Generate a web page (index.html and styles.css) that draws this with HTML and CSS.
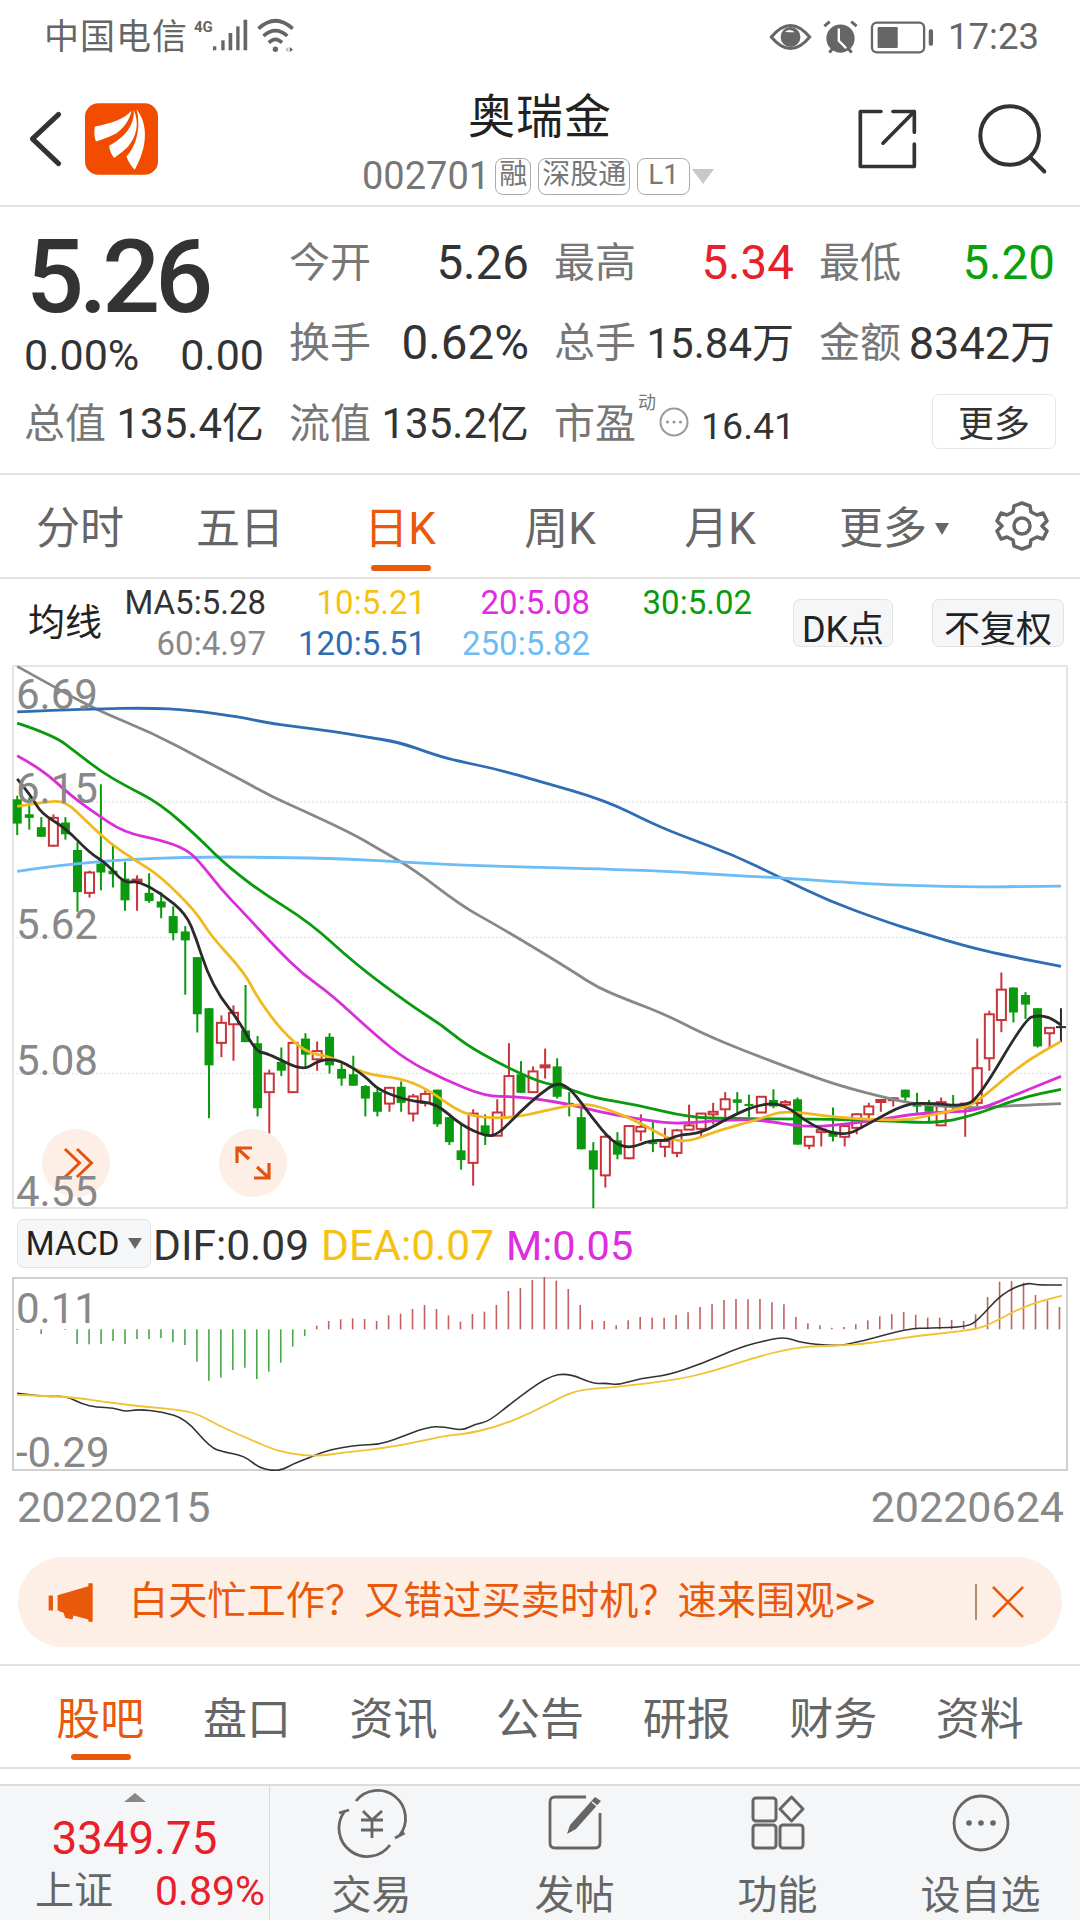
FILE: index.html
```html
<!DOCTYPE html>
<html lang="zh-CN">
<head>
    <meta charset="UTF-8">
    <meta name="viewport" content="width=device-width, initial-scale=1.0">
    <title>奥瑞金 002701</title>
    <link rel="stylesheet" href="styles.css">
</head>
<body>
    <div class="status-bar">
        <span class="carrier">中国电信</span>
        <span class="net-type">4G</span>
        <svg class="signal" viewBox="0 0 250 105">
            <g fill="#666">
                <rect x="0" y="85" width="10" height="12"/>
                <rect x="25" y="67" width="10" height="30"/>
                <rect x="47" y="45" width="11" height="52"/>
                <rect x="70" y="25" width="10" height="72"/>
                <rect x="92" y="5" width="11" height="92"/>
            </g>
            <g fill="none" stroke="#666" stroke-width="11">
                <path d="M137 32 Q188 -16 240 32"/>
                <path d="M152 54 Q188 22 224 54"/>
                <path d="M168 74 Q188 54 208 74"/>
            </g>
            <circle cx="188" cy="94" r="8" fill="#666"/>
            <polygon points="218,95 227,87 227,103" fill="#bbb"/>
            <polygon points="231,87 241,95 231,103" fill="#666"/>
        </svg>
        <div class="status-right">
            <svg class="eye" viewBox="30 35 130 90">
                <path d="M37 80 Q95 10 153 80 Q95 150 37 80 Z" fill="none" stroke="#666" stroke-width="9"/>
                <circle cx="95" cy="80" r="30" fill="#666"/>
                <path d="M78 65 Q92 52 108 66 Q92 66 78 65 Z" fill="#fff"/>
            </svg>
            <svg class="alarm" viewBox="190 25 110 110">
                <circle cx="245" cy="83" r="42" fill="#666"/>
                <path d="M197 46 L213 33 M293 46 L277 33 M212 125 L220 115 M278 125 L270 115" stroke="#666" stroke-width="9" fill="none"/>
                <path d="M240 53 V90 L262 112" stroke="#fff" stroke-width="7" fill="none"/>
            </svg>
            <svg class="battery" viewBox="335 30 195 100">
                <rect x="340" y="35" width="158" height="90" rx="15" fill="none" stroke="#666" stroke-width="7"/>
                <rect x="357" y="48" width="61" height="64" rx="3" fill="#666"/>
                <rect x="512" y="55" width="13" height="50" rx="5" fill="#666"/>
            </svg>
            <span class="clock">17:23</span>
        </div>
    </div>

    <div class="title-bar">
        <div class="title-left">
            <svg class="back" viewBox="25 65 100 165">
                <path d="M115 75 L38 147 L115 220" fill="none" stroke="#333" stroke-width="15" stroke-linecap="round" stroke-linejoin="round"/>
            </svg>
            <svg class="logo" viewBox="195 40 220 215">
                <rect x="195" y="40" width="220" height="215" rx="40" fill="#f24c00"/>
                <g fill="#fff">
                    <path d="M225 110 C270 100 310 90 335 62 C330 90 310 115 290 130 C270 140 245 150 228 155 C222 140 222 125 225 110 Z"/>
                    <path d="M268 168 C310 145 345 110 342 60 C360 100 350 140 325 170 C310 185 295 195 283 205 C275 195 268 180 268 168 Z"/>
                    <path d="M320 200 C350 170 365 110 350 58 C385 100 385 170 345 240 C335 230 325 215 320 200 Z"/>
                </g>
            </svg>
        </div>
        <div class="title-center">
            <div class="stock-name">奥瑞金</div>
            <div class="stock-code">
                <span class="code">002701</span>
                <span class="tag">融</span>
                <span class="tag">深股通</span>
                <span class="tag tag-l1">L1</span>
                <span class="code-arrow"></span>
            </div>
        </div>
        <div class="title-right">
            <svg class="share" viewBox="50 40 180 185">
                <path d="M122 50 H60 V215 H222 V148 M158 50 H222 V112 M128 145 L222 50" fill="none" stroke="#333" stroke-width="11" stroke-linejoin="round" stroke-linecap="round"/>
            </svg>
            <svg class="search" viewBox="410 25 210 215">
                <circle cx="508" cy="122" r="88" fill="none" stroke="#333" stroke-width="12"/>
                <path d="M572 190 L612 230" stroke="#333" stroke-width="12" stroke-linecap="round"/>
            </svg>
        </div>
    </div>

    <div class="quote">
        <div class="price-block">
            <div class="price">5.26</div>
            <div class="change"><span>0.00%</span><span>0.00</span></div>
        </div>
        <div class="stat"><span class="label">今开</span><span class="val big">5.26</span></div>
        <div class="stat"><span class="label">最高</span><span class="val big up">5.34</span></div>
        <div class="stat"><span class="label">最低</span><span class="val big down">5.20</span></div>
        <div class="stat"><span class="label">换手</span><span class="val big">0.62%</span></div>
        <div class="stat"><span class="label">总手</span><span class="val">15.84万</span></div>
        <div class="stat"><span class="label">金额</span><span class="val amount">8342万</span></div>
        <div class="stat"><span class="label">总值</span><span class="val">135.4亿</span></div>
        <div class="stat"><span class="label">流值</span><span class="val">135.2亿</span></div>
        <div class="stat stat-pe">
            <span class="label">市盈</span>
            <span class="pe-mark">动</span>
            <svg class="pe-more" viewBox="0 0 30 30">
                <circle cx="15" cy="15" r="13.5" fill="none" stroke="#999" stroke-width="2"/>
                <g fill="#999"><circle cx="8.5" cy="15" r="1.6"/><circle cx="15" cy="15" r="1.6"/><circle cx="21.5" cy="15" r="1.6"/></g>
            </svg>
            <span class="val pe-val">16.41</span>
        </div>
        <button class="more-btn">更多</button>
    </div>

    <div class="period-tabs">
        <div class="period">分时</div>
        <div class="period">五日</div>
        <div class="period active">日K</div>
        <div class="period">周K</div>
        <div class="period">月K</div>
        <div class="period period-more">更多<span class="period-arrow"></span></div>
        <svg class="gear" viewBox="0 0 52 52">
            <path d="M26 3 L34 6 L35 12 L41 15 L47 13 L51 21 L46 26 L51 31 L47 39 L41 37 L35 40 L34 46 L26 49 L18 46 L17 40 L11 37 L5 39 L1 31 L6 26 L1 21 L5 13 L11 15 L17 12 L18 6 Z" fill="none" stroke="#666" stroke-width="3.5" stroke-linejoin="round"/>
            <circle cx="26" cy="26" r="8" fill="none" stroke="#666" stroke-width="3.5"/>
        </svg>
    </div>

    <div class="ma-row">
        <div class="ma-title">均线</div>
        <div class="ma-legend">
            <span class="c-black">MA5:5.28</span>
            <span class="c-yellow">10:5.21</span>
            <span class="c-magenta">20:5.08</span>
            <span class="c-green">30:5.02</span>
            <span class="c-grey">60:4.97</span>
            <span class="c-blue">120:5.51</span>
            <span class="c-sky">250:5.82</span>
        </div>
        <button class="opt-btn dk-btn">DK点</button>
        <button class="opt-btn fq-btn">不复权</button>
    </div>

    <div class="kline">
        <svg id="klineChart" class="chart-svg" viewBox="12 665 1056 544"></svg>
        <div class="float-btn float-a">
            <svg viewBox="-20 -20 40 40"><path d="M-11 -14 L3.5 0 L-11 14 M1 -14 L15.5 0 L1 14" fill="none" stroke="#e2540f" stroke-width="3"/></svg>
        </div>
        <div class="float-btn float-b">
            <svg viewBox="-20 -20 40 40"><path d="M-1 -15 H-16 V0 M-16 -15 L-4 -4 M1 15 H16 V0 M16 15 L4 4" fill="none" stroke="#e2540f" stroke-width="3.2"/></svg>
        </div>
        <span class="axis-num ax-669">6.69</span>
        <span class="axis-num ax-615">6.15</span>
        <span class="axis-num ax-562">5.62</span>
        <span class="axis-num ax-508">5.08</span>
        <span class="axis-num ax-455">4.55</span>
    </div>

    <div class="macd-row">
        <div class="macd-select">MACD<span class="macd-arrow"></span></div>
        <span class="c-black">DIF:0.09</span>
        <span class="c-yellow dea">DEA:0.07</span>
        <span class="c-magenta macd-m">M:0.05</span>
    </div>

    <div class="macd">
        <svg id="macdChart" class="chart-svg" viewBox="12 1277 1056 194"></svg>
        <span class="axis-num ax-011">0.11</span>
        <span class="axis-num ax-029">-0.29</span>
    </div>

    <div class="dates"><span>20220215</span><span>20220624</span></div>

    <div class="ad">
        <svg class="ad-horn" viewBox="50 30 145 125">
            <rect x="55" y="73" width="13" height="45" fill="#e8590c"/>
            <polygon points="82,72 175,45 175,36 188,36 188,152 175,152 175,145 130,133 127,145 105,140 100,125 82,118" fill="#e8590c"/>
        </svg>
        <span class="ad-text">白天忙工作？又错过买卖时机？速来围观&gt;&gt;</span>
        <span class="ad-sep"></span>
        <svg class="ad-close" viewBox="0 0 34 34">
            <path d="M2 2 L32 32 M32 2 L2 32" stroke="#e8590c" stroke-width="2.6"/>
        </svg>
    </div>

    <div class="sub-tabs">
        <div class="sub-tab active">股吧</div>
        <div class="sub-tab">盘口</div>
        <div class="sub-tab">资讯</div>
        <div class="sub-tab">公告</div>
        <div class="sub-tab">研报</div>
        <div class="sub-tab">财务</div>
        <div class="sub-tab">资料</div>
    </div>

    <div class="bottom-bar">
        <div class="index-cell">
            <span class="index-arrow"></span>
            <div class="index-num">3349.75</div>
            <div class="index-row"><span class="index-name">上证</span><span class="index-pct">0.89%</span></div>
        </div>
        <div class="action">
            <svg class="action-icon" viewBox="0 0 64 64">
                <g fill="none" stroke="#666" stroke-width="2.8">
                    <path d="M16 10 A27 27 0 0 1 59.5 44.5"/>
                    <path d="M55 47 L64.5 42"/>
                    <path d="M50 54 A27 27 0 0 1 4.5 20.5"/>
                    <path d="M-1 22 L9 19"/>
                    <path d="M23 20 L32 29 L42 20 M32 29 V47 M21 29 H43 M21 39 H43"/>
                </g>
            </svg>
            <span>交易</span>
        </div>
        <div class="action">
            <svg class="action-icon" viewBox="-6 -5 64 64">
                <path d="M37 1 H6 Q1 1 1 6 V47 Q1 52 6 52 H46 Q51 52 51 47 V17" fill="none" stroke="#666" stroke-width="2.8"/>
                <path d="M46 1 L52 5 L27 33 L18 38 L21 29 Z" fill="#666"/>
                <path d="M43 6 L48 10" stroke="#f5f6f8" stroke-width="1.6"/>
            </svg>
            <span>发帖</span>
        </div>
        <div class="action">
            <svg class="action-icon" viewBox="-7 -7 64 64">
                <g fill="none" stroke="#666" stroke-width="3">
                    <rect x="0" y="0" width="23" height="23" rx="3"/>
                    <rect x="0" y="27" width="23" height="23" rx="3"/>
                    <rect x="27" y="27" width="23" height="23" rx="3"/>
                    <path d="M38.5 -1 L50 11 L38.5 23 L27 11 Z" stroke-linejoin="round"/>
                </g>
            </svg>
            <span>功能</span>
        </div>
        <div class="action">
            <svg class="action-icon" viewBox="0 0 64 64">
                <circle cx="32" cy="32" r="27" fill="none" stroke="#666" stroke-width="2.8"/>
                <g fill="#666"><circle cx="20" cy="32" r="2.8"/><circle cx="32" cy="32" r="2.8"/><circle cx="44" cy="32" r="2.8"/></g>
            </svg>
            <span>设自选</span>
        </div>
    </div>

    <script src="chart.js"></script>
</body>
</html>
```

FILE: styles.css
```css
* {
    box-sizing: border-box;
}
html, body {
    margin: 0;
    padding: 0;
}
body {
    width: 1080px;
    height: 1920px;
    overflow: hidden;
    background: #fff;
    color: #333;
    font-family: Roboto, "Noto Sans CJK SC", sans-serif;
    line-height: 1;
}
svg {
    display: block;
    overflow: visible;
}
button {
    font-family: inherit;
    padding: 0;
    cursor: pointer;
}

/* status bar */
.status-bar {
    height: 72px;
    display: flex;
    align-items: center;
    padding: 2px 41px 0 44px;
    color: #666;
}
.carrier {
    font-size: 35px;
    letter-spacing: 1px;
}
.net-type {
    font-size: 15px;
    font-weight: 700;
    margin: -20px 0 0 6px;
    width: 19px;
}
.signal {
    width: 83px;
    height: 35px;
    margin: -4px 0 0 0;
}
.status-right {
    margin-left: auto;
    display: flex;
    align-items: center;
}
.eye {
    width: 43px;
    height: 30px;
}
.alarm {
    width: 37px;
    height: 37px;
    margin-left: 10px;
}
.battery {
    width: 65px;
    height: 33px;
    margin-left: 11px;
}
.clock {
    font-size: 36.5px;
    margin-left: 13px;
}

/* title bar */
.title-bar {
    height: 135px;
    display: grid;
    grid-template-columns: 1fr auto 1fr;
    border-bottom: 2px solid #e2e2e2;
}
.title-left {
    display: flex;
    align-items: center;
    padding-left: 28px;
}
.back {
    width: 34px;
    height: 56px;
}
.logo {
    width: 73px;
    height: 72px;
    margin-left: 23px;
}
.title-center {
    display: flex;
    flex-direction: column;
    align-items: center;
    padding-top: 21px;
}
.stock-name {
    font-size: 47px;
    color: #222;
    letter-spacing: 1px;
}
.stock-code {
    display: flex;
    align-items: center;
    margin-top: 17px;
    color: #777;
}
.code {
    font-size: 38px;
    margin-right: 5px;
}
.tag {
    height: 37px;
    padding: 0 3px;
    margin-right: 7px;
    border: 1.5px solid #aaa;
    border-radius: 8px;
    font-size: 28px;
    line-height: 32px;
}
.tag-l1 {
    padding: 0 10px;
    margin-right: 0;
}
.code-arrow {
    width: 0;
    height: 0;
    border-left: 11px solid transparent;
    border-right: 11px solid transparent;
    border-top: 15px solid #c8c8c8;
    margin: 0 4px 0 2px;
}
.title-right {
    display: flex;
    align-items: center;
    justify-content: flex-end;
    padding-right: 33px;
}
.share {
    width: 60px;
    height: 62px;
}
.search {
    width: 70px;
    height: 72px;
    margin-left: 60px;
}

/* quote block */
.quote {
    height: 268px;
    padding: 16px 24px 0;
    display: grid;
    grid-template-columns: 240px 240px 240px 236px;
    grid-template-rows: repeat(3, 80.5px);
    column-gap: 25px;
    border-bottom: 2px solid #e2e2e2;
}
.price-block {
    grid-row: span 2;
    display: flex;
    flex-direction: column;
}
.price {
    font-size: 102px;
    font-weight: 500;
    letter-spacing: -5px;
    line-height: 90px;
    color: #333;
    margin: 9px 0 0 2px;
}
.change {
    display: flex;
    justify-content: space-between;
    font-size: 43px;
    margin-top: 12px;
}
.stat {
    display: flex;
    align-items: center;
    justify-content: space-between;
}
.label {
    flex-shrink: 0;
    white-space: nowrap;
    font-size: 41px;
    color: #777;
}
.val {
    font-size: 42px;
    color: #333;
}
.val.big {
    font-size: 47.5px;
}
.val.amount {
    font-size: 45px;
}
.up {
    color: #e8202a !important;
}
.down {
    color: #0aa00e !important;
}
.stat-pe {
    justify-content: flex-start;
}
.pe-mark {
    font-size: 18px;
    color: #777;
    margin: -42px 0 0 2px;
}
.pe-more {
    width: 30px;
    height: 30px;
    margin: -4px 0 0 3px;
}
.pe-val {
    font-size: 37.5px;
    margin: 4px 0 0 12px;
}
.more-btn {
    justify-self: end;
    align-self: center;
    width: 124px;
    height: 55px;
    margin: -6px -1px 0 0;
    background: #fff;
    border: 1.5px solid #e6e6e6;
    border-radius: 7px;
    font-size: 36px;
    color: #333;
}

/* period tabs */
.period-tabs {
    height: 104px;
    display: grid;
    grid-template-columns: repeat(6, 160px) 1fr;
    align-items: center;
    border-bottom: 2px solid #e2e2e2;
}
.period {
    position: relative;
    height: 102px;
    padding-top: 6px;
    display: flex;
    align-items: center;
    justify-content: center;
    font-size: 44px;
    color: #666;
}
.period.active {
    color: #e8590c;
}
.period.active::after {
    content: "";
    position: absolute;
    left: 51px;
    bottom: 6px;
    width: 60px;
    height: 6px;
    border-radius: 3px;
    background: #e8590c;
}
.period-more {
    justify-content: flex-start;
    padding-left: 39px;
}
.period-arrow {
    width: 0;
    height: 0;
    border-left: 7px solid transparent;
    border-right: 7px solid transparent;
    border-top: 12px solid #666;
    margin-left: 8px;
}
.gear {
    width: 52px;
    height: 52px;
    margin-left: 36px;
}

/* moving averages */
.ma-row {
    height: 86px;
    padding-top: 2px;
    display: flex;
    align-items: center;
}
.ma-title {
    width: 125px;
    padding-left: 28px;
    font-size: 37px;
    color: #222;
}
.ma-legend {
    display: grid;
    grid-template-columns: 141px 160px 164px 162px;
    grid-auto-rows: 41px;
    align-items: center;
    justify-items: end;
    font-size: 33px;
}
.opt-btn {
    height: 48px;
    background: #f5f6f8;
    border: 1.5px solid #e3e3e6;
    border-radius: 7px;
    font-size: 36px;
    color: #222;
}
.dk-btn {
    width: 100px;
    margin-left: 41px;
}
.fq-btn {
    width: 132px;
    margin-left: 39px;
}
.c-black { color: #333; }
.c-yellow { color: #f5c211; }
.c-magenta { color: #e02ce0; }
.c-green { color: #0a9a0e; }
.c-grey { color: #888; }
.c-blue { color: #2e6db4; }
.c-sky { color: #6cbcf5; }

/* k line */
.kline {
    position: relative;
    height: 544px;
    margin: 0 12px;
    border: 2px solid #e4e4e4;
}
.chart-svg {
    position: absolute;
    left: -2px;
    top: -2px;
    width: 1056px;
    overflow: hidden;
}
.kline .chart-svg {
    height: 544px;
}
.macd .chart-svg {
    height: 194px;
}
.axis-num {
    position: absolute;
    left: 2px;
    font-size: 42px;
    line-height: 30px;
    color: #888;
}
.ax-669 { top: 13px; }
.ax-615 { top: 107px; }
.ax-562 { top: 243px; }
.ax-508 { top: 379px; }
.ax-455 { top: 510px; }
.float-btn {
    position: absolute;
    top: 462px;
    width: 68px;
    height: 68px;
    border-radius: 50%;
    background: #fdeee6;
    display: flex;
    align-items: center;
    justify-content: center;
}
.float-btn svg {
    width: 40px;
    height: 40px;
}
.float-a { left: 28px; }
.float-b { left: 205px; }

/* macd */
.macd-row {
    height: 68px;
    display: flex;
    align-items: center;
    padding-left: 17px;
    font-size: 42.5px;
}
.macd-row > span {
    margin-top: 6px;
}
.macd-select {
    width: 134px;
    height: 49px;
    margin-right: 2px;
    display: flex;
    align-items: center;
    justify-content: center;
    font-size: 33px;
    color: #222;
    background: #f5f6f8;
    border: 1.5px solid #e3e3e6;
    border-radius: 7px;
}
.macd-arrow {
    width: 0;
    height: 0;
    border-left: 7px solid transparent;
    border-right: 7px solid transparent;
    border-top: 11px solid #666;
    margin-left: 9px;
}
.macd-row > .dea {
    margin: 6px 12px 0;
}
.macd-m {
    font-size: 41.5px;
}
.macd {
    position: relative;
    height: 194px;
    margin: 0 12px;
    border: 2px solid #d0d0d0;
}
.ax-011 { top: 15px; }
.ax-029 { top: 159px; }
.dates {
    height: 68px;
    display: flex;
    align-items: center;
    justify-content: space-between;
    padding: 4px 16px 0 17px;
    font-size: 43px;
    color: #888;
}

/* ad banner */
.ad {
    height: 90px;
    margin: 18px 18px 17px;
    padding-left: 29px;
    display: flex;
    align-items: center;
    background: #fdeee6;
    border-radius: 45px;
}
.ad-horn {
    width: 48px;
    height: 42px;
}
.ad-text {
    margin-left: 34px;
    width: 846px;
    font-size: 39.2px;
    color: #e8590c;
    white-space: nowrap;
}
.ad-sep {
    width: 1.5px;
    height: 36px;
    background: #b88a70;
}
.ad-close {
    width: 34px;
    height: 34px;
    margin-left: 14px;
}

/* sub tabs */
.sub-tabs {
    height: 105px;
    padding: 0 27px;
    display: grid;
    grid-template-columns: repeat(7, 146.6px);
    border-top: 2px solid #e2e2e2;
    border-bottom: 2px solid #e2e2e2;
}
.sub-tab {
    position: relative;
    padding-top: 6px;
    display: flex;
    align-items: center;
    justify-content: center;
    font-size: 44px;
    color: #666;
}
.sub-tab.active {
    color: #e8590c;
}
.sub-tab.active::after {
    content: "";
    position: absolute;
    left: 44px;
    bottom: 7px;
    width: 60px;
    height: 6px;
    border-radius: 3px;
    background: #e8590c;
}

/* bottom bar */
.bottom-bar {
    height: 136px;
    margin-top: 15px;
    display: grid;
    grid-template-columns: 270px repeat(4, 203px);
    background: #f5f6f8;
    border-top: 2px solid #dcdce0;
}
.index-cell {
    display: flex;
    flex-direction: column;
    align-items: center;
    border-right: 1.5px solid #dcdce0;
}
.index-arrow {
    width: 0;
    height: 0;
    margin-top: 7px;
    border-left: 11px solid transparent;
    border-right: 11px solid transparent;
    border-bottom: 9px solid #888;
}
.index-num {
    margin-top: 14px;
    font-size: 45.5px;
    color: #e8202a;
}
.index-row {
    width: 100%;
    margin-top: 9px;
    padding: 0 4px 0 35px;
    display: flex;
    align-items: center;
    justify-content: space-between;
}
.index-name {
    font-size: 39px;
    color: #666;
}
.index-pct {
    font-size: 41px;
    color: #e8202a;
}
.action {
    display: flex;
    flex-direction: column;
    align-items: center;
    padding-top: 5px;
    font-size: 40px;
    color: #666;
}
.action-icon {
    width: 64px;
    height: 64px;
    margin-bottom: 21px;
}
```

FILE: chart.js
```js
// measured off the chart: [x, wick top, body top, body bottom, wick bottom, colour]
const R = 'r', G = 'g', K = 'k';
const candles = [
    [50,380,390,458,490,G],[85,385,432,442,475,G],[120,440,468,495,495,G],[155,432,442,520,522,R],
    [190,440,455,488,503,G],[225,510,532,650,705,G],[260,590,595,652,665,R],[293,348,570,595,645,G],
    [328,520,590,600,637,G],[363,565,612,673,702,G],[398,603,615,620,702,R],[433,597,652,675,680,G],
    [468,650,676,693,723,G],[503,690,717,765,785,G],[538,745,760,785,937,G],[573,832,832,992,1043,G],
    [607,975,975,1135,1283,G],[643,995,1016,1072,1112,R],[678,967,988,1020,1122,R],[713,910,1037,1070,1070,G],
    [748,1053,1073,1255,1278,G],[782,1147,1158,1210,1370,R],[817,1085,1125,1150,1165,G],[851,1070,1072,1210,1210,R],
    [887,1045,1060,1105,1145,G],[921,1068,1095,1118,1150,R],[957,1045,1055,1135,1158,G],[992,1130,1145,1172,1192,G],
    [1026,1108,1160,1192,1192,G],[1061,1190,1193,1228,1278,G],[1096,1200,1210,1265,1278,G],[1131,1195,1198,1242,1265,R],
    [1165,1180,1195,1240,1265,G],[1200,1215,1222,1270,1292,R],[1235,1205,1215,1240,1250,R],[1270,1203,1203,1300,1307,G],
    [1305,1280,1280,1350,1358,G],[1339,1300,1373,1400,1427,G],[1374,1258,1270,1408,1472,R],[1409,1272,1303,1330,1358,G],
    [1444,1230,1267,1332,1332,R],[1478,1073,1165,1280,1280,R],[1513,1123,1160,1212,1212,G],[1548,1138,1152,1210,1210,R],
    [1583,1088,1135,1138,1172,R],[1618,1115,1138,1223,1228,G],[1653,1210,1240,1245,1278,G],[1688,1250,1280,1370,1370,G],
    [1723,1350,1373,1427,1535,G],[1758,1330,1335,1443,1477,R],[1793,1322,1345,1385,1398,G],[1827,1303,1305,1395,1398,R],
    [1861,1272,1307,1320,1347,R],[1896,1288,1350,1355,1378,G],[1931,1310,1347,1363,1392,R],[1966,1313,1317,1380,1392,R],
    [2001,1245,1303,1315,1315,R],[2036,1268,1270,1313,1335,R],[2071,1240,1265,1272,1300,R],[2106,1210,1230,1258,1280,R],
    [2141,1210,1230,1240,1268,G],[2175,1217,1243,1245,1280,G],[2211,1222,1223,1267,1267,R],[2246,1202,1232,1250,1255,G],
    [2281,1232,1238,1245,1255,R],[2316,1225,1230,1357,1357,G],[2350,1333,1335,1360,1370,R],[2385,1315,1315,1322,1362,R],
    [2419,1253,1320,1335,1348,G],[2453,1300,1305,1335,1362,R],[2488,1270,1272,1310,1328,R],[2523,1240,1250,1272,1290,R],
    [2558,1232,1232,1236,1265,R],[2594,1225,1227,1232,1250,R],[2629,1203,1203,1225,1240,G],[2663,1212,1245,1250,1268,G],
    [2698,1232,1245,1265,1298,G],[2733,1225,1238,1303,1303,R],[2768,1218,1245,1250,1265,G],[2803,1242,1242,1250,1335,R],
    [2838,1060,1143,1240,1250,R],[2873,982,992,1115,1150,R],[2908,875,923,1008,1042,R],[2943,917,917,987,1015,G],
    [2978,930,938,965,1005,G],[3013,975,975,1082,1085,G],[3048,1030,1030,1045,1085,R],[3081,975,1028,1030,1070,K]
];

const maLines = [
    ['#888888', [50,18,170,82,280,140,440,203,600,285,700,335,790,383,900,430,1030,490,1110,535,1200,585,1340,688,1440,742,1568,815,1668,875,1738,918,1818,950,1938,995,2038,1045,2168,1097,2328,1155,2438,1192,2568,1225,2668,1245,2818,1255,2908,1250,2978,1246,3081,1242]],
    ['#2e6db4', [50,145,270,137,430,134,550,140,700,160,770,175,870,188,970,200,1060,215,1160,230,1260,265,1330,283,1440,305,1568,340,1758,393,1898,460,1988,495,2128,545,2268,610,2408,675,2558,728,2668,762,2808,802,2918,827,3081,858]],
    ['#6cbcf5', [50,592,140,578,300,563,450,555,620,551,800,553,1000,556,1200,568,1400,576,1568,581,1738,585,1938,592,2088,601,2268,610,2518,627,2668,632,2818,636,2968,634,3081,633]],
    ['#0a9a0e', [50,177,155,210,230,265,290,310,360,350,465,402,580,500,640,560,750,645,900,735,1030,850,1200,972,1280,1020,1350,1075,1450,1130,1568,1183,1638,1195,1718,1225,1858,1247,1998,1280,2128,1285,2368,1285,2568,1290,2718,1297,2818,1278,2968,1225,3081,1202]],
    ['#d92ed9', [50,268,120,305,200,375,270,425,360,483,470,505,540,530,580,565,640,640,710,710,800,805,880,880,960,935,1090,1050,1180,1120,1290,1175,1410,1222,1490,1222,1568,1230,1658,1245,1738,1265,1838,1282,1938,1298,2018,1295,2098,1288,2208,1287,2348,1310,2468,1298,2568,1285,2648,1272,2748,1265,2838,1262,2968,1210,3081,1166]],
    ['#f2b81d', [50,410,130,397,190,395,250,450,320,515,400,565,465,605,570,705,610,770,710,875,750,950,820,1040,890,1100,960,1110,1060,1160,1160,1170,1240,1200,1340,1270,1420,1283,1500,1280,1568,1265,1688,1240,1758,1255,1858,1295,1938,1340,1998,1350,2078,1320,2208,1285,2278,1260,2428,1282,2628,1290,2698,1275,2798,1255,2848,1230,2968,1130,3081,1068]],
    ['#2b2b2b', [50,333,90,380,120,430,190,470,260,540,310,570,360,625,400,618,470,655,540,710,570,780,600,870,640,945,690,1005,745,1098,775,1100,880,1152,925,1120,985,1118,1060,1165,1100,1205,1190,1235,1265,1240,1340,1303,1410,1333,1445,1330,1510,1265,1568,1215,1618,1182,1658,1200,1718,1280,1778,1350,1828,1368,1888,1345,1938,1345,1968,1330,2038,1325,2128,1275,2208,1243,2278,1243,2358,1305,2453,1335,2528,1295,2628,1243,2698,1240,2798,1250,2843,1225,2978,1005,3013,995,3048,1000,3081,1022]]
];

const macdBars = [
    360,358,372,358,360,402,403,402,393,402,387,387,384,397,405,455,512,503,480,473,507,485,458,410,378,
    347,333,328,325,327,333,316,311,297,285,297,316,335,312,305,285,243,234,210,198,212,237,285,331,333,
    346,331,321,323,323,315,307,291,282,270,267,268,267,277,283,321,340,346,353,351,343,331,319,312,306,
    314,323,323,330,333,313,261,215,213,218,255,272,291
];

const difLine = [25,550,65,561,95,557,120,583,140,592,165,593,182,605,200,598,235,605,270,627,305,712,325,726,355,738,375,772,395,782,410,780,425,762,450,742,480,718,520,705,550,704,575,687,620,651,645,650,672,662,690,642,710,634,745,575,795,500,825,489,862,522,880,519,897,525,930,505,970,496,1020,460,1075,411,1115,390,1140,381,1165,399,1205,407,1230,405,1320,355,1350,355,1405,350,1420,330,1455,250,1490,218,1505,225,1542,225];
const deaLine = [25,555,95,558,165,580,210,590,265,600,290,615,320,650,360,685,400,722,440,737,470,737,500,727,570,712,650,675,670,674,720,652,770,610,820,555,845,539,900,530,990,507,1040,480,1100,440,1150,415,1180,409,1250,404,1340,375,1415,360,1440,340,1490,285,1542,257];

const kx = x => x / 2.904;
const ky = y => 660 + y / 2.8;
const mx = x => x / 1.452;
const my = y => 1210 + y / 3;

function smoothPath(flat, fx, fy) {
    const pts = [];
    for (let i = 0; i < flat.length; i += 2) pts.push([fx(flat[i]), fy(flat[i + 1])]);
    let d = 'M' + pts[0][0].toFixed(1) + ' ' + pts[0][1].toFixed(1);
    for (let i = 1; i < pts.length - 1; i++) {
        const mxp = (pts[i][0] + pts[i + 1][0]) / 2;
        const myp = (pts[i][1] + pts[i + 1][1]) / 2;
        d += 'Q' + pts[i][0].toFixed(1) + ' ' + pts[i][1].toFixed(1) + ' ' + mxp.toFixed(1) + ' ' + myp.toFixed(1);
    }
    const last = pts[pts.length - 1];
    return d + 'L' + last[0].toFixed(1) + ' ' + last[1].toFixed(1);
}

function line(x1, y1, x2, y2, color, w) {
    return '<line x1="' + x1 + '" y1="' + y1 + '" x2="' + x2 + '" y2="' + y2 + '" stroke="' + color + '" stroke-width="' + w + '"/>';
}

function drawKline() {
    let out = '';
    [802, 937.5, 1073.5].forEach(y => {
        out += '<line x1="12" y1="' + y + '" x2="1068" y2="' + y + '" stroke="#e6e6e6" stroke-width="1.5" stroke-dasharray="2 2"/>';
    });
    candles.forEach(c => {
        const x = kx(c[0]);
        const wt = ky(c[1]), bt = ky(c[2]), bb = ky(c[3]), wb = ky(c[4]);
        if (c[5] === G) {
            out += line(x, wt, x, wb, '#0a9a0e', 2);
            out += '<rect x="' + (x - 4.5) + '" y="' + bt + '" width="9" height="' + Math.max(bb - bt, 2) + '" fill="#0a9a0e"/>';
        } else if (c[5] === R) {
            out += line(x, wt, x, bt, '#c8343a', 2) + line(x, bb, x, wb, '#c8343a', 2);
            out += '<rect x="' + (x - 4.5) + '" y="' + bt + '" width="9" height="' + Math.max(bb - bt, 2) + '" fill="#fff" stroke="#c8343a" stroke-width="2"/>';
        } else {
            out += line(x, wt, x, wb, '#2b2b2b', 2) + line(x - 5, bt, x + 5, bt, '#2b2b2b', 2);
        }
    });
    maLines.forEach(m => {
        out += '<path d="' + smoothPath(m[1], kx, ky) + '" fill="none" stroke="' + m[0] + '" stroke-width="2.8" stroke-linejoin="round"/>';
    });
    document.getElementById('klineChart').innerHTML = out;
}

function drawMacd() {
    let out = '';
    const base = my(358);
    macdBars.forEach((v, i) => {
        const x = 17.2 + i * 11.98;
        if (v === 358) return;
        out += line(x, base, x, my(v), v > 358 ? '#4aa84a' : '#c0605f', 1.6);
    });
    out += '<path d="' + smoothPath(difLine, mx, my) + '" fill="none" stroke="#333" stroke-width="1.6"/>';
    out += '<path d="' + smoothPath(deaLine, mx, my) + '" fill="none" stroke="#f2c230" stroke-width="1.8"/>';
    document.getElementById('macdChart').innerHTML = out;
}

drawKline();
drawMacd();
```
